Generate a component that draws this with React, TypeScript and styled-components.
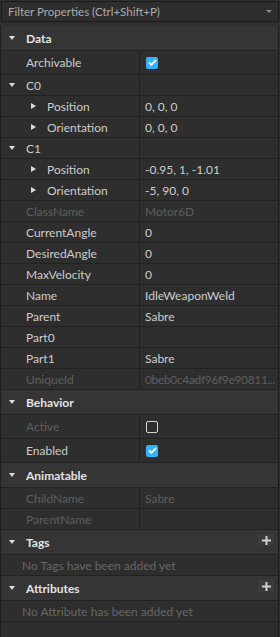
import React from "react";
import styled, { createGlobalStyle } from "styled-components";

const Global = createGlobalStyle`
  html, body { margin: 0; padding: 0; background: #2e2e2e; }
  body { font-family: "Lato", "Noto Sans", sans-serif; font-size: 12px; }
  * { box-sizing: border-box; }
`;

const Panel = styled.div`
  width: 280px;
  height: 637px;
  background: #2e2e2e;
  display: flex;
  flex-direction: column;
  overflow: hidden;
`;

const FilterBar = styled.div`
  margin: 1px 1px 0 1px;
  height: 21px;
  border: 1px solid #1c1c1c;
  background: #2e2e2e;
  display: flex;
  align-items: center;
  justify-content: space-between;
  padding: 0 6px 0 6px;
  color: #aaaaaa;
  font-size: 11.5px;
`;

const DropArrow = styled.span`
  width: 0;
  height: 0;
  border-left: 3px solid transparent;
  border-right: 3px solid transparent;
  border-top: 3px solid #8a8a8a;
`;

const List = styled.div`
  margin-top: 4px;
  border-left: 1px solid #1f1f1f;
  border-right: 1px solid #1f1f1f;
  width: 279px;
  flex: 1;
  display: flex;
  flex-direction: column;
`;

const Header = styled.div`
  height: 25px;
  flex-shrink: 0;
  background: #353535;
  border-bottom: 1px solid #222222;
  display: flex;
  align-items: center;
  position: relative;
  color: #e3e3e3;
  font-weight: 700;
  font-size: 12px;
`;

const DownTri = styled.span<{ $x: number }>`
  width: 0;
  height: 0;
  margin-left: ${(p) => p.$x}px;
  border-left: 3.5px solid transparent;
  border-right: 3.5px solid transparent;
  border-top: 4px solid #dddddd;
`;

const RightTri = styled.span<{ $x: number }>`
  width: 0;
  height: 0;
  margin-left: ${(p) => p.$x}px;
  border-top: 3.5px solid transparent;
  border-bottom: 3.5px solid transparent;
  border-left: 5px solid #dddddd;
`;

const HeaderLabel = styled.span`
  position: absolute;
  left: 25px;
`;

const AddButton = styled.span`
  position: absolute;
  right: 4px;
  top: 4px;
  width: 16px;
  height: 12px;
  background: #3b3b3b;
  display: flex;
  align-items: center;
  justify-content: center;
`;

const Row = styled.div<{ $tall?: boolean }>`
  height: ${(p) => (p.$tall ? 24 : 21)}px;
  flex-shrink: 0;
  border-bottom: 1px solid #222222;
  display: grid;
  grid-template-columns: 139px 1fr;
  background: #2e2e2e;
`;

const NameCell = styled.div<{ $disabled?: boolean }>`
  border-right: 1px solid #222222;
  display: flex;
  align-items: center;
  position: relative;
  color: ${(p) => (p.$disabled ? "#5e5e5e" : "#cccccc")};
  white-space: nowrap;
`;

const NameText = styled.span<{ $indent: number }>`
  position: absolute;
  left: ${(p) => p.$indent}px;
`;

const ValueCell = styled.div<{ $disabled?: boolean; $tight?: boolean }>`
  display: flex;
  align-items: center;
  padding-left: 5px;
  color: ${(p) => (p.$disabled ? "#5e5e5e" : "#cccccc")};
  letter-spacing: ${(p) => (p.$tight ? "-0.35px" : "normal")};
  white-space: nowrap;
  min-width: 0;
`;

const Check = styled.span<{ $on: boolean }>`
  width: 12px;
  height: 12px;
  margin-left: 1px;
  border-radius: 2px;
  background: ${(p) => (p.$on ? "#35b2f8" : "transparent")};
  border: ${(p) => (p.$on ? "none" : "1px solid #d8d8d8")};
  display: flex;
  align-items: center;
  justify-content: center;
`;

const Message = styled.div`
  height: 21px;
  flex-shrink: 0;
  border-bottom: 1px solid #222222;
  display: flex;
  align-items: center;
  padding-left: 21px;
  color: #666666;
`;

type Prop = {
  name: string;
  value?: string;
  disabled?: boolean;
  check?: boolean;
  group?: boolean;
  sub?: boolean;
  tight?: boolean;
};

const CheckMark = () => (
  <svg width="9" height="7" viewBox="0 0 9 7">
    <path d="M1 3.5 L3.4 5.8 L8 1.2" fill="none" stroke="#ffffff" strokeWidth="1.8" />
  </svg>
);

const Plus = () => (
  <svg width="9" height="9" viewBox="0 0 9 9">
    <path d="M4.5 0 V9 M0 4.5 H9" stroke="#d0d0d0" strokeWidth="2" />
  </svg>
);

const PropRow: React.FC<{ p: Prop }> = ({ p }) => (
  <Row $tall={p.check !== undefined}>
    <NameCell $disabled={p.disabled}>
      {p.group && <DownTri $x={8} />}
      {p.sub && <RightTri $x={30} />}
      <NameText $indent={p.sub ? 46 : 25}>{p.name}</NameText>
    </NameCell>
    <ValueCell $disabled={p.disabled} $tight={p.tight}>
      {p.check !== undefined ? (
        <Check $on={p.check}>{p.check && <CheckMark />}</Check>
      ) : (
        p.value
      )}
    </ValueCell>
  </Row>
);

const SectionHeader: React.FC<{ title: string; add?: boolean }> = ({ title, add }) => (
  <Header>
    <DownTri $x={8} />
    <HeaderLabel>{title}</HeaderLabel>
    {add && (
      <AddButton>
        <Plus />
      </AddButton>
    )}
  </Header>
);

const data: Prop[] = [
  { name: "Archivable", check: true },
  { name: "C0", group: true },
  { name: "Position", value: "0, 0, 0", sub: true },
  { name: "Orientation", value: "0, 0, 0", sub: true },
  { name: "C1", group: true },
  { name: "Position", value: "-0.95, 1, -1.01", sub: true },
  { name: "Orientation", value: "-5, 90, 0", sub: true },
  { name: "ClassName", value: "Motor6D", disabled: true },
  { name: "CurrentAngle", value: "0" },
  { name: "DesiredAngle", value: "0" },
  { name: "MaxVelocity", value: "0" },
  { name: "Name", value: "IdleWeaponWeld" },
  { name: "Parent", value: "Sabre" },
  { name: "Part0", value: "" },
  { name: "Part1", value: "Sabre" },
  { name: "UniqueId", value: "0beb0c4adf96f9e90811...", disabled: true, tight: true },
];

const behavior: Prop[] = [
  { name: "Active", check: false, disabled: true },
  { name: "Enabled", check: true },
];

const animatable: Prop[] = [
  { name: "ChildName", value: "Sabre", disabled: true },
  { name: "ParentName", value: "", disabled: true },
];

export default function App() {
  return (
    <>
      <Global />
      <Panel>
        <FilterBar>
          <span>Filter Properties (Ctrl+Shift+P)</span>
          <DropArrow />
        </FilterBar>
        <List>
          <SectionHeader title="Data" />
          {data.map((p, i) => (
            <PropRow key={"d" + i} p={p} />
          ))}
          <SectionHeader title="Behavior" />
          {behavior.map((p, i) => (
            <PropRow key={"b" + i} p={p} />
          ))}
          <SectionHeader title="Animatable" />
          {animatable.map((p, i) => (
            <PropRow key={"a" + i} p={p} />
          ))}
          <SectionHeader title="Tags" add />
          <Message>No Tags have been added yet</Message>
          <SectionHeader title="Attributes" add />
          <Message>No Attribute has been added yet</Message>
        </List>
      </Panel>
    </>
  );
}
